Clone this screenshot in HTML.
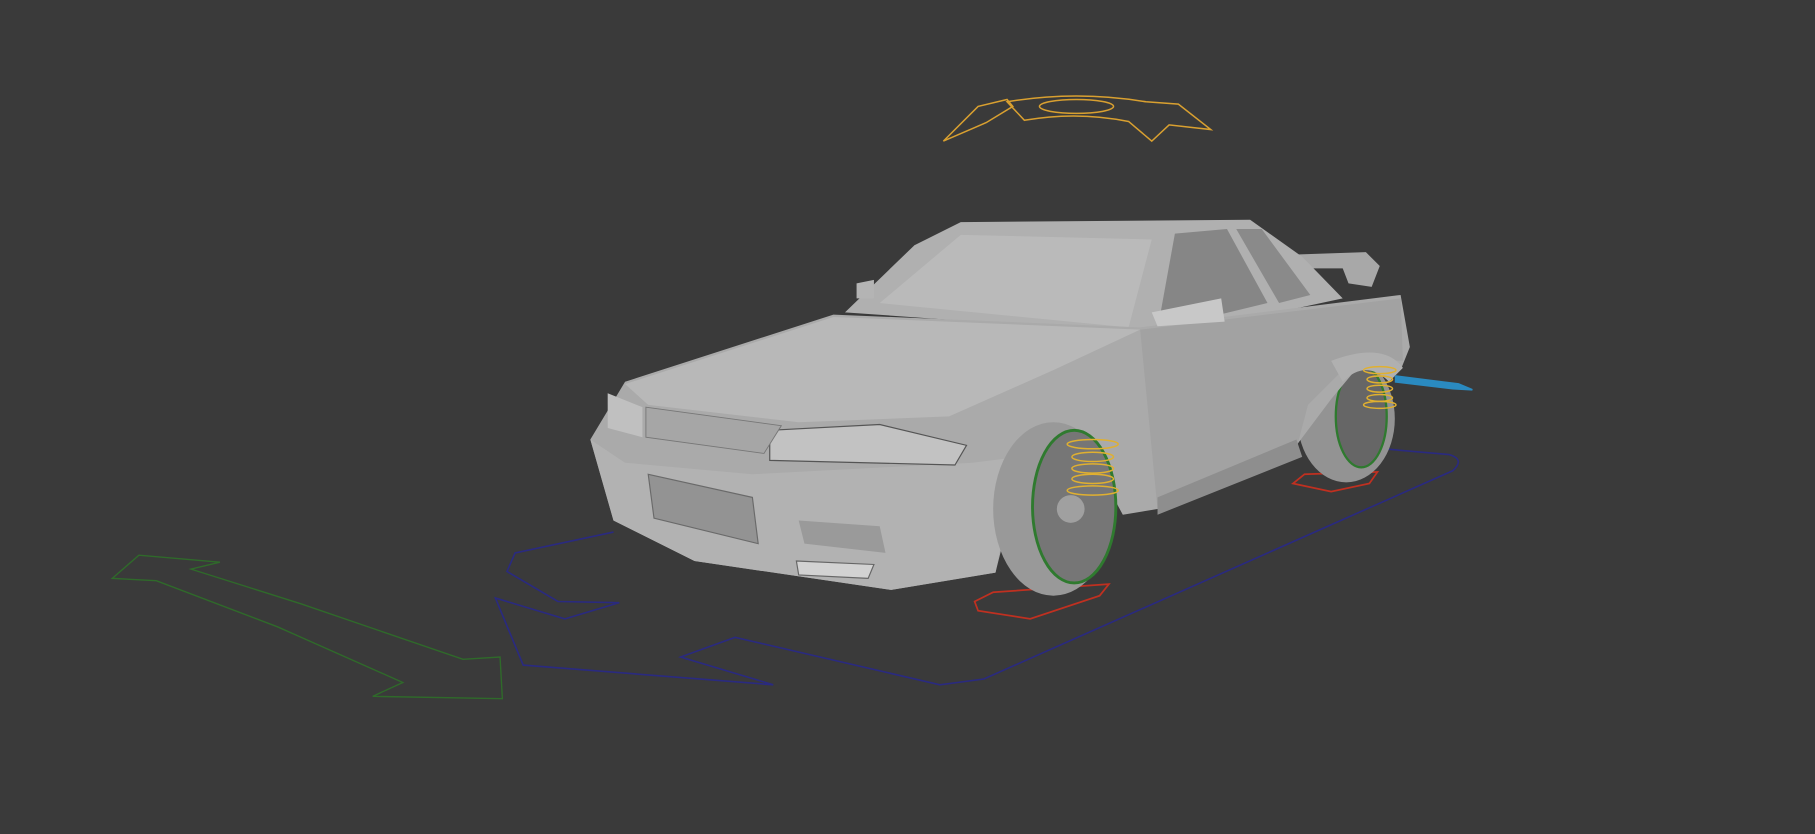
<!DOCTYPE html>
<html><head><meta charset="utf-8"><style>
html,body{margin:0;padding:0;background:#3a3a3a;overflow:hidden}
svg{display:block}
</style></head><body>
<svg width="1815" height="834" viewBox="0 0 1568 721" preserveAspectRatio="none" xmlns="http://www.w3.org/2000/svg">
<rect width="1568" height="721" fill="#3a3a3a"/>
<g fill="none" stroke="#d9a030" stroke-width="1.3">
<path d="M815,122 L845,92 L870,86 L875,92 L852,106 Z"/>
<path d="M870,88 Q930,78 990,88 L1018,90 L1046,112 L1010,108 L995,122 L975,105 Q930,96 885,104 Z"/>
<ellipse cx="930" cy="92" rx="32" ry="6"/>
</g>
<path d="M97,500 L120,480 L190,486 L165,492 L260,522 L400,570 L432,568 L434,604 L322,602 L348,590 L240,542 L135,502 Z" fill="none" stroke="#2f6a2a" stroke-width="1.2"/>
<path d="M530,460 L445,478 L438,494 L482,520 L535,521 L488,535 L428,517 L452,575 L668,592 L588,568 L635,551 L812,592 L850,587 L1255,407 Q1266,397 1252,393 L1195,388" fill="none" stroke="#2a2a80" stroke-width="1.4"/>
<path d="M842,520 L858,512 L958,505 L950,515 L890,535 L845,528 Z" fill="none" stroke="#c03020" stroke-width="1.5"/>
<path d="M1117,418 L1127,410 L1190,408 L1183,418 L1150,425 Z" fill="none" stroke="#c03020" stroke-width="1.5"/>
<path d="M1120,220 L1180,218 L1192,230 L1185,248 L1165,245 L1160,232 L1125,232 Z" fill="#a8a8a8"/>
<path d="M830,192 L1080,190 L1125,222 L1160,258 L1010,290 L730,270 L790,212 Z" fill="#b0b0b0"/>
<path d="M760,262 L830,203 L995,207 L975,283 Z" fill="#bababa"/>
<path d="M1000,285 L1015,202 L1060,198 L1095,262 Z" fill="#868686"/>
<path d="M1068,198 L1090,198 L1132,255 L1105,262 Z" fill="#8a8a8a"/>
<ellipse cx="1163" cy="362" rx="42" ry="55" fill="#939393"/>
<ellipse cx="1176" cy="360" rx="22" ry="44" fill="#666" stroke="#2f7a2f" stroke-width="2"/>
<path d="M540,330 L720,272 L985,283 L1210,255 L1218,300 L1210,320 L1175,315 L1150,345 L1120,385 L1000,440 L970,445 L935,380 L885,395 L860,495 L770,510 L600,485 L530,450 L510,380 Z" fill="#aaaaaa"/>
<path d="M540,332 L720,274 L985,285 L910,320 L820,360 L690,365 L560,350 Z" fill="#b8b8b8"/>
<path d="M985,285 L1210,258 L1212,312 L1170,310 L1130,350 L1120,388 L1000,440 Z" fill="#a2a2a2"/>
<path d="M1150,312 Q1195,295 1212,318 L1200,330 Q1180,310 1160,330 Z" fill="#b0b0b0"/>
<path d="M510,380 L540,400 L650,410 L840,400 L880,395 L860,495 L770,510 L600,485 L530,450 Z" fill="#b2b2b2"/>
<path d="M560,410 L650,430 L655,470 L565,448 Z" fill="#939393" stroke="#6a6a6a"/>
<path d="M690,450 L760,455 L765,478 L695,470 Z" fill="#9a9a9a"/>
<path d="M665,372 L760,367 L835,385 L825,402 L665,398 Z" fill="#c2c2c2" stroke="#555" stroke-width="1"/>
<path d="M525,340 L555,352 L555,378 L525,370 Z" fill="#c0c0c0"/>
<path d="M558,352 L675,368 L660,392 L558,378 Z" fill="#a6a6a6" stroke="#777" stroke-width="0.8"/>
<path d="M688,485 L755,488 L750,500 L690,497 Z" fill="#d2d2d2" stroke="#666"/>
<path d="M1000,430 L1120,380 L1125,395 L1000,445 Z" fill="#8e8e8e"/>
<path d="M995,270 L1055,258 L1058,278 L1000,282 Z" fill="#c8c8c8"/>
<path d="M740,245 L755,242 L755,258 L740,258 Z" fill="#b4b4b4"/>
<ellipse cx="910" cy="440" rx="52" ry="75" fill="#999"/>
<ellipse cx="928" cy="438" rx="36" ry="66" fill="#767676" stroke="#2f7a2f" stroke-width="2.5"/>
<circle cx="925" cy="440" r="12" fill="#a0a0a0"/>
<g fill="none" stroke="#e0b030" stroke-width="1.3">
<ellipse cx="944" cy="384" rx="22" ry="4"/><ellipse cx="944" cy="395" rx="18" ry="4"/><ellipse cx="944" cy="405" rx="18" ry="4"/><ellipse cx="944" cy="414" rx="18" ry="4"/><ellipse cx="944" cy="424" rx="22" ry="4"/>
<ellipse cx="1192" cy="320" rx="14" ry="3"/><ellipse cx="1192" cy="328" rx="11" ry="3"/><ellipse cx="1192" cy="336" rx="11" ry="3"/><ellipse cx="1192" cy="344" rx="11" ry="3"/><ellipse cx="1192" cy="350" rx="14" ry="3"/>
</g>
<path d="M1205,325 L1260,332 L1272,337 L1255,336 L1205,330" fill="#2a8ac0" stroke="#2a8ac0" stroke-width="1.5"/>
</svg>
</body></html>
